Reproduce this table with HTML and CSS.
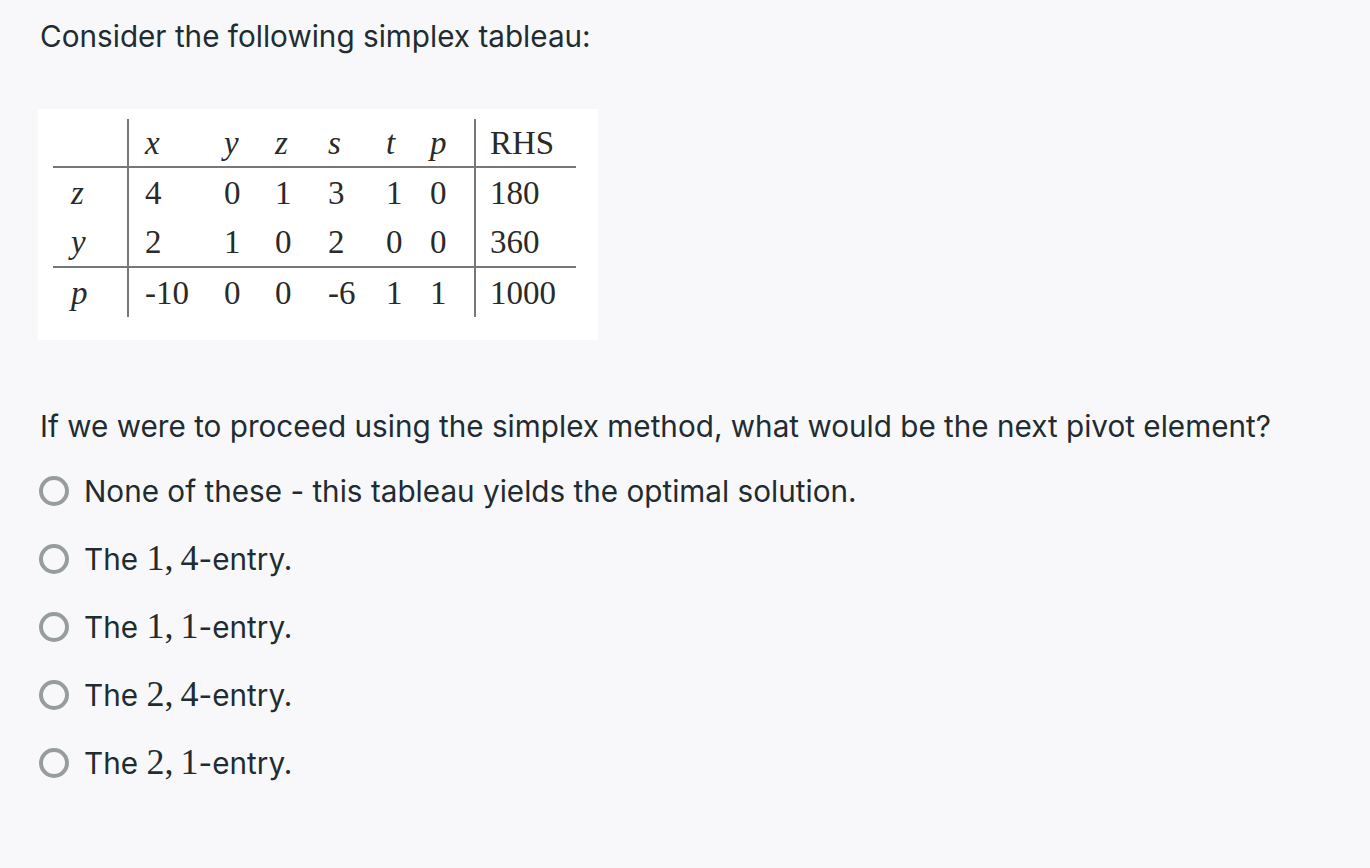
FILE: index.html
```html
<!DOCTYPE html>
<html lang="en">
<head>
<meta charset="utf-8">
<title>Simplex tableau question</title>
<link rel="stylesheet" href="styles.css">
</head>
<body>
<main class="page">
  <p class="intro">Consider the following simplex tableau:</p>

  <div class="figure">
    <div class="tableau">
      <div class="cell head lbl"></div>
      <div class="cell head first var">x</div>
      <div class="cell head var">y</div>
      <div class="cell head var">z</div>
      <div class="cell head var">s</div>
      <div class="cell head var">t</div>
      <div class="cell head var">p</div>
      <div class="cell head rhs">RHS</div>

      <div class="cell lbl var">z</div>
      <div class="cell first">4</div>
      <div class="cell">0</div>
      <div class="cell">1</div>
      <div class="cell">3</div>
      <div class="cell">1</div>
      <div class="cell">0</div>
      <div class="cell rhs">180</div>

      <div class="cell mid lbl var">y</div>
      <div class="cell mid first">2</div>
      <div class="cell mid">1</div>
      <div class="cell mid">0</div>
      <div class="cell mid">2</div>
      <div class="cell mid">0</div>
      <div class="cell mid">0</div>
      <div class="cell mid rhs">360</div>

      <div class="cell lbl var">p</div>
      <div class="cell first">-10</div>
      <div class="cell">0</div>
      <div class="cell">0</div>
      <div class="cell">-6</div>
      <div class="cell">1</div>
      <div class="cell">1</div>
      <div class="cell rhs">1000</div>
    </div>
  </div>

  <p class="question">If we were to proceed using the simplex method, what would be the next pivot element?</p>

  <ul class="options">
    <li class="option"><span class="radio"></span><span class="label">None of these - this tableau yields the optimal solution.</span></li>
    <li class="option"><span class="radio"></span><span class="label">The <span class="math">1,&#8201;4</span>-entry.</span></li>
    <li class="option"><span class="radio"></span><span class="label">The <span class="math">1,&#8201;1</span>-entry.</span></li>
    <li class="option"><span class="radio"></span><span class="label">The <span class="math">2,&#8201;4</span>-entry.</span></li>
    <li class="option"><span class="radio"></span><span class="label">The <span class="math">2,&#8201;1</span>-entry.</span></li>
  </ul>
</main>
</body>
</html>
```

FILE: styles.css
```css
html, body {
  margin: 0;
  padding: 0;
  background: #f8f8fa;
}

.page {
  padding: 18px 38px 0 38px;
  font-family: Inter, Lato, "Noto Sans", sans-serif;
  font-size: 29.7px;
  line-height: 36px;
  color: #1f2c31;
}

.intro {
  margin: 0;
  padding-left: 2px;
}

.figure {
  margin-top: 55px;
  width: 545px;
  height: 221px;
  padding: 10px 0 0 15px;
  background: #ffffff;
}

.tableau {
  display: grid;
  grid-template-columns: 74px 97px 51px 53px 58px 44px 44px 102px;
  grid-template-rows: 49px 50px 50px 49px;
  font-family: "Liberation Serif", "Times New Roman", serif;
  font-size: 33px;
  line-height: 38px;
  color: #2a2a2a;
}

.cell {
  display: flex;
  align-items: center;
  white-space: nowrap;
}

.var {
  font-style: italic;
}

.lbl {
  padding-left: 18px;
}

.first {
  border-left: 2px solid #777777;
  padding-left: 16px;
}

.rhs {
  border-left: 2px solid #777777;
  padding-left: 14px;
}

.head,
.mid {
  border-bottom: 2px solid #777777;
}

.question {
  margin: 68px 0 0 0;
  padding-left: 2px;
}

.options {
  list-style: none;
  margin: 29px 0 0 0;
  padding: 0;
  display: flex;
  flex-direction: column;
  gap: 32px;
}

.option {
  display: flex;
  align-items: center;
  height: 36px;
  gap: 15px;
}

.radio {
  flex: none;
  box-sizing: border-box;
  width: 30px;
  height: 30px;
  margin-left: 1px;
  border: 4px solid #979d9c;
  border-radius: 50%;
}

.label {
  white-space: nowrap;
}

.math {
  font-family: "Liberation Serif", "Times New Roman", serif;
  font-size: 36px;
  line-height: 30px;
}
```
